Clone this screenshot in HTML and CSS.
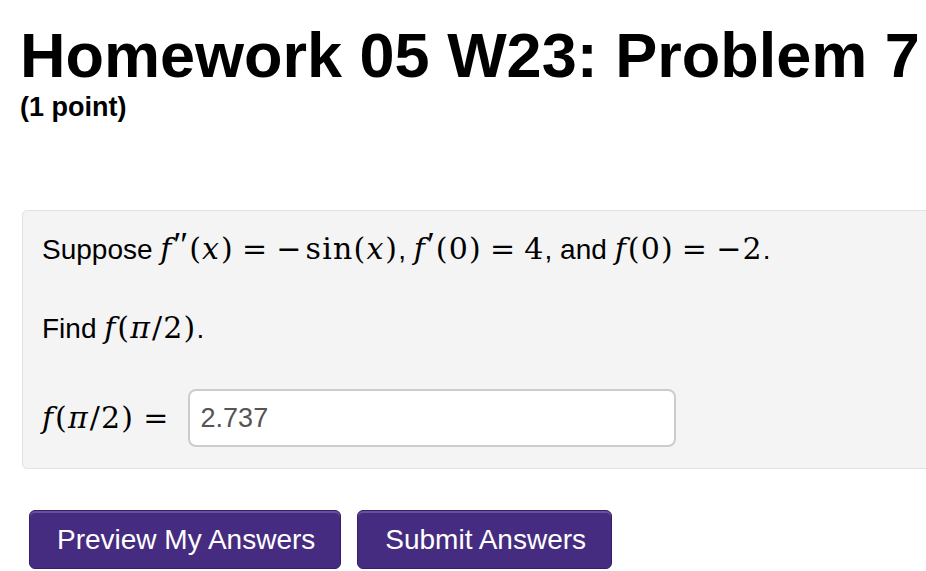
FILE: index.html
```html
<!DOCTYPE html>
<html lang="en">
<head>
<meta charset="utf-8">
<title>Homework 05 W23: Problem 7</title>
<link rel="stylesheet" href="styles.css">
</head>
<body>
<div class="page">
  <h1 class="title">Homework 05 W23: Problem 7</h1>
  <div class="points">(1 point)</div>

  <div class="problem">
    <p class="line">Suppose <span class="math"><i>f</i><span class="prime">′′</span>(<i>x</i>)<span class="rel">=</span><span class="minus">−</span><span class="fn">sin</span>(<i>x</i>)</span>, <span class="math"><i>f</i><span class="prime">′</span>(0)<span class="rel">=</span>4</span>, and <span class="math"><i>f</i>(0)<span class="rel">=</span>−2</span>.</p>
    <p class="line">Find <span class="math"><i>f</i>(<i>π</i>/2)</span>.</p>
    <div class="answer-row">
      <span class="math"><i>f</i>(<i>π</i>/2)<span class="rel">=</span></span>
      <input class="answer" type="text" value="2.737">
    </div>
  </div>

  <div class="actions">
    <button class="btn" type="button">Preview My Answers</button>
    <button class="btn" type="button">Submit Answers</button>
  </div>
</div>
</body>
</html>
```

FILE: styles.css
```css
html, body {
  margin: 0;
  padding: 0;
  background: #ffffff;
  overflow: hidden;
}

body {
  font-family: "Liberation Sans", Arial, sans-serif;
  color: #000;
}

.page {
  padding: 20px 0 0 20px;
}

.title {
  margin: 0;
  font-size: 63px;
  line-height: 70px;
  font-weight: bold;
  white-space: nowrap;
}

.points {
  margin-top: 2px;
  font-size: 27px;
  line-height: 31px;
  font-weight: bold;
}

.problem {
  margin-top: 87px;
  margin-left: 2px;
  width: 960px;
  box-sizing: border-box;
  background: #f4f4f4;
  border: 1px solid #e2e2e2;
  border-radius: 5px;
  padding: 18px 20px 21px 19px;
  font-size: 28px;
}

.line {
  margin: 0 0 40px 0;
  height: 40px;
  line-height: 40px;
  white-space: nowrap;
}

.math {
  font-family: "DejaVu Serif", "Liberation Serif", serif;
  font-size: 30px;
  line-height: 1;
  letter-spacing: 1.2px;
}

.math i {
  font-style: italic;
  letter-spacing: 2px;
}

.prime {
  font-family: "Liberation Serif", serif;
  font-style: normal;
  font-size: 36px;
  letter-spacing: -1px;
  position: relative;
  top: -2px;
  margin-left: 0;
  margin-right: 2px;
}

.rel {
  margin: 0 8px;
}

.minus {
  margin-right: 3px;
}

.answer-row {
  display: flex;
  align-items: center;
  height: 58px;
  margin-top: 3px;
}

.answer-row .rel {
  margin-left: 9px;
  margin-right: 18px;
}

.answer {
  width: 488px;
  height: 58px;
  box-sizing: border-box;
  border: 2px solid #cccccc;
  border-radius: 8px;
  background: #fff;
  padding: 0 11px;
  font-family: "Liberation Sans", Arial, sans-serif;
  font-size: 27px;
  color: #555555;
  outline: none;
}

.actions {
  display: flex;
  gap: 16px;
  margin-top: 41px;
  margin-left: 9px;
}

.btn {
  height: 59px;
  padding: 0 25px 0 27px;
  border: 1px solid #34206a;
  border-radius: 6px;
  background: #462c81;
  box-shadow: inset 0 2px 0 rgba(255, 255, 255, 0.18);
  color: #ffffff;
  font-family: "Liberation Sans", Arial, sans-serif;
  font-size: 28px;
  cursor: pointer;
}
```
